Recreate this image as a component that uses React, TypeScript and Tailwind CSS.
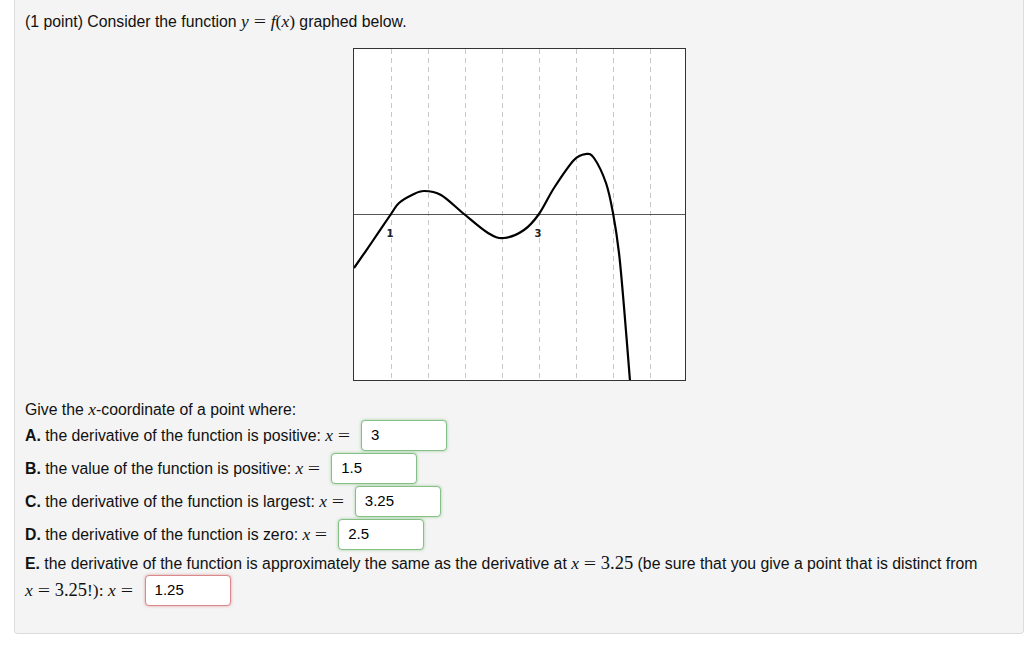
import React from "react";

const pts: [number, number][] = [
  [0, 219], [18, 193], [37, 165], [45, 154], [58, 146], [70, 142], [87, 146],
  [110, 165], [134, 184], [150, 189], [170, 181], [185, 165], [200, 139],
  [220, 111], [232, 105], [240, 109], [252, 134], [259, 164], [265, 204],
  [270, 258], [276, 332],
];

function smoothPath(p: [number, number][]) {
  let d = `M${p[0][0]},${p[0][1]}`;
  for (let i = 0; i < p.length - 1; i++) {
    const p0 = p[i - 1] || p[i];
    const p1 = p[i];
    const p2 = p[i + 1];
    const p3 = p[i + 2] || p2;
    const c1x = p1[0] + (p2[0] - p0[0]) / 6;
    const c1y = p1[1] + (p2[1] - p0[1]) / 6;
    const c2x = p2[0] - (p3[0] - p1[0]) / 6;
    const c2y = p2[1] - (p3[1] - p1[1]) / 6;
    d += ` C${c1x},${c1y} ${c2x},${c2y} ${p2[0]},${p2[1]}`;
  }
  return d;
}

function Graph() {
  const grid = [37, 74, 111, 148, 185, 222, 259, 296];
  return (
    <div className="mx-auto w-[333px] h-[333px] border border-[#333] bg-white">
      <svg width="331" height="331" viewBox="0 0 331 331">
        {grid.map((x) => (
          <line key={x} x1={x + 0.5} y1={0} x2={x + 0.5} y2={331} stroke="#c8c8c8" strokeWidth={1} strokeDasharray="5 4" />
        ))}
        <line x1={0} y1={165.5} x2={331} y2={165.5} stroke="#555" strokeWidth={1} />
        <path d={smoothPath(pts)} fill="none" stroke="#000" strokeWidth={2.2} strokeLinejoin="round" />
        <text x={36} y={188} textAnchor="middle" fontSize="10" fontWeight="bold" fontFamily="'DejaVu Sans', sans-serif" fill="#222">1</text>
        <text x={184} y={188} textAnchor="middle" fontSize="10" fontWeight="bold" fontFamily="'DejaVu Sans', sans-serif" fill="#222">3</text>
      </svg>
    </div>
  );
}

function M({ children }: { children: React.ReactNode }) {
  return <span className="font-['Liberation_Serif',serif] text-[17.5px]">{children}</span>;
}

function Eq() {
  return <span className="mx-[6px] inline-block scale-x-125">=</span>;
}

function X() {
  return <M><i>x</i><Eq /></M>;
}

function Answer({ value, bad }: { value: string; bad?: boolean }) {
  return (
    <span
      className={
        "inline-flex items-center w-[86px] h-[31px] px-[9px] bg-white rounded-[4px] border text-[15px] text-black " +
        (bad
          ? "border-[#d9888c] shadow-[0_0_3px_rgba(210,80,80,0.55)]"
          : "border-[#86c086] shadow-[0_0_3px_rgba(80,170,80,0.55)]")
      }
    >
      {value}
    </span>
  );
}

function Row({ label, text, value }: { label: string; text: string; value: string }) {
  return (
    <div className="h-[33px] flex items-center">
      <span>
        <b>{label}</b> {text} <X />
      </span>
      <span className="ml-[6px]">
        <Answer value={value} />
      </span>
    </div>
  );
}

export default function App() {
  return (
    <div className="w-[1024px] h-[657px] bg-white font-['Liberation_Sans',Arial,sans-serif] text-[15.8px] text-[#111]">
      <div className="ml-[14px] w-[1010px] h-[634px] bg-[#f4f4f4] border border-t-0 border-[#dcdcdc] rounded-b-[4px] px-[10px]">
        <div className="pt-[11px] h-[31px] leading-[20px]">
          (1 point) Consider the function <M><i>y</i><Eq /><i>f</i>(<i>x</i>)</M> graphed below.
        </div>
        <div className="mt-[17px]">
          <Graph />
        </div>
        <div className="mt-[18px] h-[20px] leading-[20px]">
          Give the <M><i>x</i></M>-coordinate of a point where:
        </div>
        <Row label="A." text="the derivative of the function is positive:" value="3" />
        <Row label="B." text="the value of the function is positive:" value="1.5" />
        <Row label="C." text="the derivative of the function is largest:" value="3.25" />
        <Row label="D." text="the derivative of the function is zero:" value="2.5" />
        <div className="mt-[2px] h-[20px] leading-[20px] whitespace-nowrap">
          <b>E.</b> the derivative of the function is approximately the same as the derivative at <M><i>x</i><Eq /><span className="text-[18.5px]">3.25</span></M> (be sure that you give a point that is distinct from
        </div>
        <div className="mt-[1px] h-[33px] flex items-center">
          <span>
            <M><i>x</i><Eq /><span className="text-[18.5px]">3.25</span>!):</M> <X />
          </span>
          <span className="ml-[7px]">
            <Answer value="1.25" bad />
          </span>
        </div>
      </div>
    </div>
  );
}
